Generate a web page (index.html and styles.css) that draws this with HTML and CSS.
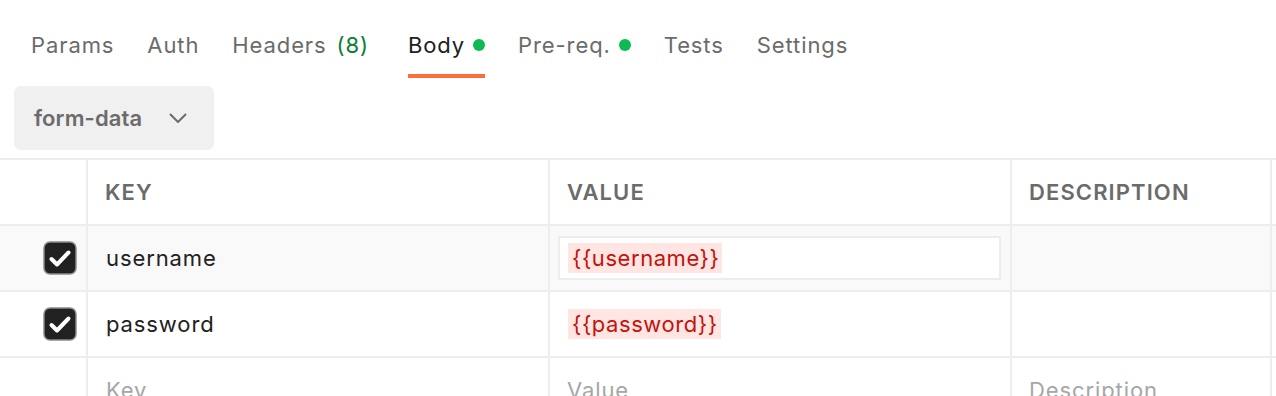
FILE: index.html
```html
<!DOCTYPE html>
<html>
<head>
<meta charset="utf-8">
<link rel="stylesheet" href="styles.css">
</head>
<body>
<div class="tabs">
  <div class="tab">Params</div>
  <div class="tab">Auth</div>
  <div class="tab tab-wide">Headers<span class="count">(8)</span></div>
  <div class="tab active">Body<span class="dot"></span></div>
  <div class="tab">Pre-req.<span class="dot"></span></div>
  <div class="tab">Tests</div>
  <div class="tab">Settings</div>
</div>
<div class="toolbar">
  <div class="select">
    <span>form-data</span>
    <svg class="chev" width="18" height="10" viewBox="0 0 18 10"><path d="M1 1 L9 9 L17 1" fill="none" stroke="#6b6b6b" stroke-width="2"/></svg>
  </div>
</div>
<div class="table">
  <div class="row head">
    <div class="cell check"></div>
    <div class="cell">KEY</div>
    <div class="cell">VALUE</div>
    <div class="cell">DESCRIPTION</div>
    <div class="cell last"></div>
  </div>
  <div class="row hover">
    <div class="cell check">
      <svg class="cb" width="34" height="34" viewBox="0 0 34 34"><rect x="1" y="1" width="32" height="32" rx="6" fill="#212121" stroke="#8a8a8a" stroke-width="1.5"/><path d="M8.5 18 L14 23.5 L25.5 11.5" fill="none" stroke="#fff" stroke-width="4" stroke-linecap="round" stroke-linejoin="round"/></svg>
    </div>
    <div class="cell key">username</div>
    <div class="cell val">
      <div class="input"><span class="var">{{username}}</span></div>
    </div>
    <div class="cell"></div>
    <div class="cell last"></div>
  </div>
  <div class="row">
    <div class="cell check">
      <svg class="cb" width="34" height="34" viewBox="0 0 34 34"><rect x="1" y="1" width="32" height="32" rx="6" fill="#212121" stroke="#8a8a8a" stroke-width="1.5"/><path d="M8.5 18 L14 23.5 L25.5 11.5" fill="none" stroke="#fff" stroke-width="4" stroke-linecap="round" stroke-linejoin="round"/></svg>
    </div>
    <div class="cell key">password</div>
    <div class="cell val">
      <div class="plain"><span class="var">{{password}}</span></div>
    </div>
    <div class="cell"></div>
    <div class="cell last"></div>
  </div>
  <div class="row">
    <div class="cell check"></div>
    <div class="cell key ph">Key</div>
    <div class="cell ph">Value</div>
    <div class="cell ph">Description</div>
    <div class="cell last"></div>
  </div>
</div>
</body>
</html>
```
FILE: styles.css
```css
html, body {
  margin: 0;
  padding: 0;
  background: #fff;
}
body {
  width: 1276px;
  height: 396px;
  overflow: hidden;
  font-family: Inter, "Noto Sans", sans-serif;
  font-size: 22px;
  letter-spacing: 0.9px;
  color: #212121;
}
.tabs {
  display: flex;
  gap: 33px;
  padding-left: 31px;
}
.tab {
  height: 78px;
  box-sizing: border-box;
  padding-top: 15px;
  border-bottom: 4px solid transparent;
  display: flex;
  align-items: center;
  color: #6b6b6b;
  line-height: 26px;
}
.tab-wide {
  margin-right: 6px;
}
.tab .count {
  color: #0a7e35;
  margin-left: 10px;
}
.tab.active {
  color: #212121;
  border-bottom-color: #ff6c37;
}
.dot {
  width: 12px;
  height: 12px;
  border-radius: 50%;
  background: #0cbb52;
  margin-left: 8px;
}
.toolbar {
  padding: 8px 0 8px 14px;
}
.select {
  width: 200px;
  height: 64px;
  box-sizing: border-box;
  background: #f0f0f0;
  border-radius: 7px;
  padding: 0 27px 0 20px;
  display: flex;
  align-items: center;
  justify-content: space-between;
  font-weight: 600;
  letter-spacing: 0.1px;
  color: #6b6b6b;
}
.table {
  border-top: 2px solid #ededed;
}
.row {
  display: grid;
  grid-template-columns: 88px 462px 462px 260px 1fr;
  height: 66px;
  box-sizing: border-box;
  border-bottom: 2px solid #ededed;
}
.row.hover {
  background: #f9f9f9;
}
.cell {
  border-right: 2px solid #ededed;
  display: flex;
  align-items: center;
  padding-left: 17px;
  white-space: nowrap;
  overflow: hidden;
}
.cell.last {
  border-right: none;
  padding-left: 0;
}
.head .cell {
  font-weight: 600;
  color: #6b6b6b;
  letter-spacing: 1.1px;
}
.cell.check {
  padding-left: 0;
  justify-content: flex-end;
  padding-right: 9px;
}
.cell.key {
  padding-left: 18px;
}
.cell.val {
  padding-left: 8px;
  padding-right: 9px;
}
.input {
  flex: 1;
  height: 44px;
  box-sizing: border-box;
  border: 2px solid #ededed;
  background: #fff;
  display: flex;
  align-items: center;
  padding-left: 8px;
}
.plain {
  flex: 1;
  display: flex;
  align-items: center;
  padding-left: 10px;
}
.var {
  background: #ffe6e3;
  color: #c4120c;
  padding: 2px 3px 2px 4px;
  letter-spacing: 0.55px;
  line-height: 26px;
}
.ph {
  color: #a6a6a6;
}
```
